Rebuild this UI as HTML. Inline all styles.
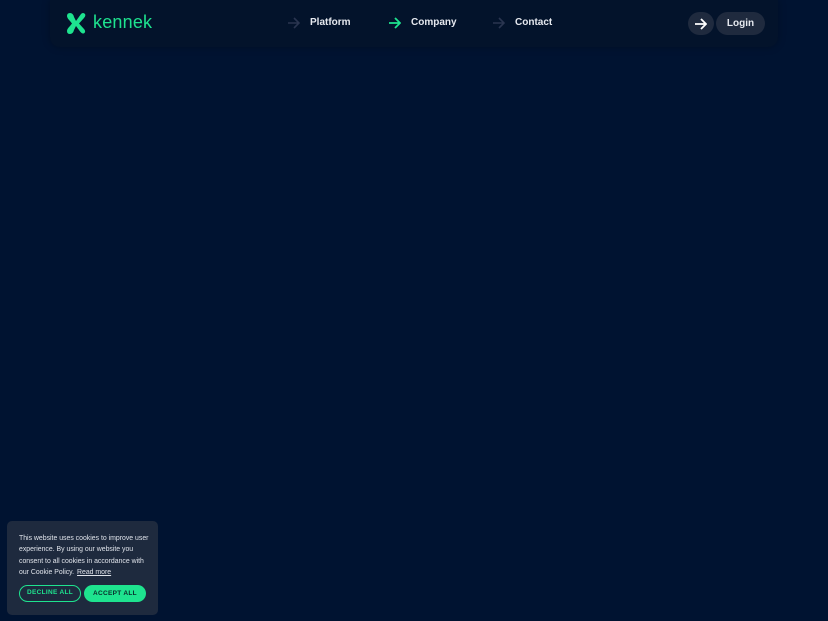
<!DOCTYPE html>
<html><head><meta charset="utf-8"><style>
*{margin:0;padding:0;box-sizing:border-box}
html,body{width:828px;height:621px;overflow:hidden;background:#001331;font-family:"Liberation Sans",sans-serif}
.hdr{position:absolute;left:50px;top:0;width:728px;height:47px;background:#03132b;border-radius:0 0 10px 10px;box-shadow:0 0 8px rgba(0,0,0,.25)}
.logo{position:absolute;left:66px;top:13px}
.brand{position:absolute;left:93px;top:12px;color:#1ee38f;font-size:18px;letter-spacing:.2px}
.nav{position:absolute;top:17px;color:#e6e9ef;font-size:10px;font-weight:bold}
.arr{position:absolute;top:17px}
.lg1{position:absolute;left:688px;top:12px;width:26px;height:23px;border-radius:12px;background:#1f2a3e}
.lg2{position:absolute;left:716px;top:12px;width:49px;height:23px;border-radius:12px;background:#1f2a3e;color:#e6e9ef;font-size:10px;font-weight:bold;text-align:center;line-height:23px}
.ck{position:absolute;left:7px;top:521px;width:151px;height:94px;background:#1e2a3e;border-radius:5px}
.ck p{position:absolute;left:12px;top:12px;width:136px;color:#dfe3ea;font-size:6.9px;line-height:11.3px}
.ck u{margin-left:3px}
.b{position:absolute;top:64px;height:17px;border-radius:9px;font-size:6.5px;font-weight:bold;text-align:center;line-height:14px;letter-spacing:.3px}
.d{left:12px;width:62px;border:1.5px solid #1ee38f;color:#1ee38f}
.a{left:77px;width:62px;background:#1ee38f;color:#0a2a2a;line-height:17px}
</style></head><body>
<div class="hdr"></div>
<svg class="logo" width="21" height="21" viewBox="0 0 21 21"><g fill="#1ee38f"><path d="M1 3 Q1 0 4 0 Q7 0 8 4 L10 8 L15 1 Q17 -1 19 1 Q20 3 18 5 L13 10.5 L18 16 Q20 18 18.5 20 Q16.5 21.5 14.5 19 L10 13 L8 17 Q7 21 4 21 Q1 21 1 18 Q1 16 4 13 L6 10.5 L4 8 Q1 5 1 3Z"/></g></svg>
<div class="brand">kennek</div>
<svg class="arr" style="left:288px" width="12" height="12" viewBox="0 0 12 12"><path d="M0 6H11M6 1L11 6L6 11" stroke="#2a3550" stroke-width="1.6" fill="none"/></svg>
<div class="nav" style="left:310px">Platform</div>
<svg class="arr" style="left:389px" width="12" height="12" viewBox="0 0 12 12"><path d="M0 6H11M6 1L11 6L6 11" stroke="#1ee38f" stroke-width="1.8" fill="none"/></svg>
<div class="nav" style="left:411px">Company</div>
<svg class="arr" style="left:493px" width="12" height="12" viewBox="0 0 12 12"><path d="M0 6H11M6 1L11 6L6 11" stroke="#2a3550" stroke-width="1.6" fill="none"/></svg>
<div class="nav" style="left:515px">Contact</div>
<div class="lg1"><svg style="position:absolute;left:7px;top:6px" width="12" height="12" viewBox="0 0 12 12"><path d="M0 6H11M6 1L11 6L6 11" stroke="#fff" stroke-width="1.8" fill="none"/></svg></div>
<div class="lg2">Login</div>
<div class="ck"><p>This website uses cookies to improve user experience. By using our website you consent to all cookies in accordance with our Cookie Policy.<u>Read more</u></p>
<div class="b d">DECLINE ALL</div><div class="b a">ACCEPT ALL</div></div>
</body></html>
